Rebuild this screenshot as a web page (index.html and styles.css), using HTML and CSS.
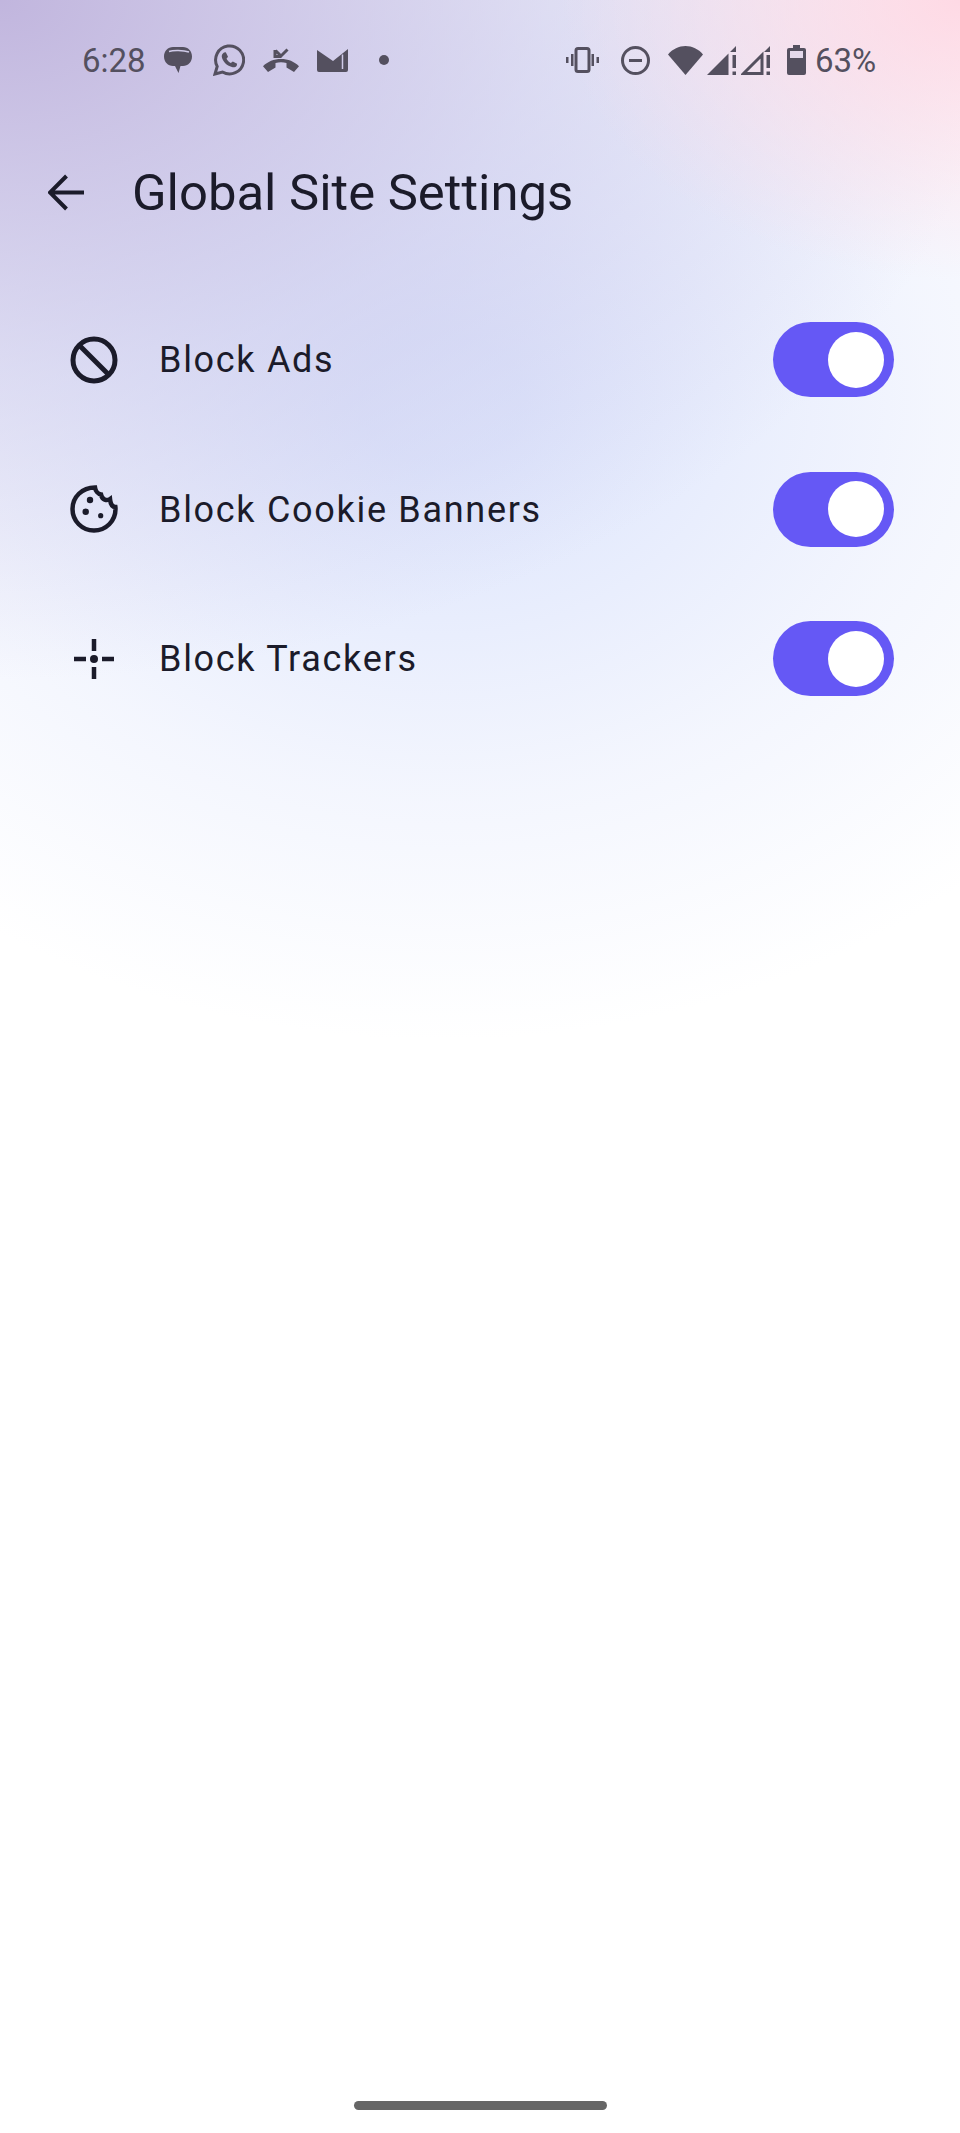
FILE: index.html
```html
<!DOCTYPE html>
<html lang="en">
<head>
  <meta charset="UTF-8">
  <title>Global Site Settings</title>
  <link rel="stylesheet" href="styles.css">
</head>
<body>
  <div class="screen">
    <div class="status-bar">
      <div class="status-left">
        <span class="clock">6:28</span>
        <svg class="ic-msg" viewBox="0 0 28 26"><path d="M9 0h10c5 0 9 4 9 9.500S24 19 19 19h-2.500l-2 7-3.500-7H9C4 19 0 15 0 9.500S4 0 9 0z"/><path class="gap" d="M5 4.500C9 3.200 19 3.200 25 5"/></svg>
        <svg class="ic-whatsapp" viewBox="0 0 32 32"><path class="line" d="M2 30l2.200-7.600A14 14 0 1 1 9.500 28z"/><path d="M11 8.500l1.800-.3 2.200 4.600-1.500 2c1 2 2.500 3.300 4.300 4.200l2-1.600 4.300 2.300-.4 2c-1 1.600-3 1.900-4.800 1.400-5.400-1.500-9-5.400-10.100-10-.3-1.900.5-3.500 2.200-4.600z"/></svg>
        <svg class="ic-call" viewBox="0 0 36 24"><path d="M18 11c7 0 13.500 2.600 18 7.200L31 24l-7.500-4.500V15c-3.500-1-7.500-1-11 0v4.500L5 24l-5-5.800C4.500 13.600 11 11 18 11z"/><path class="line" d="M24.500 1.500L18 8l-5.500-5.500M12 2v6.500h6.500"/></svg>
        <svg class="ic-gmail" viewBox="0 0 31 24"><path d="M0 2l16 11L31 1v21a2 2 0 0 1-2 2H2a2 2 0 0 1-2-2z"/><path class="gap" d="M25.500 6.500V21"/></svg>
        <span class="dot"></span>
      </div>
      <div class="status-right">
        <svg class="ic-vibrate" viewBox="0 0 33 26"><rect class="line" x="10" y="1.500" width="13" height="23" rx="2"/><path d="M5 7h2.500v12H5zM0 10h2.500v6H0zM25.500 7H28v12h-2.500zM30.500 10H33v6h-2.500z"/></svg>
        <svg class="ic-dnd" viewBox="0 0 29 29"><circle class="line" cx="14.500" cy="14.500" r="13"/><path d="M8 13h13v3H8z"/></svg>
        <svg class="ic-wifi" viewBox="0 0 35 29"><path d="M17.500 29L0 8.500C4.500 3 11 0 17.500 0S30.500 3 35 8.500z"/></svg>
        <svg class="ic-signal" viewBox="0 0 30 29"><path d="M0 29L21.500 7.500V29zM23 6l6-6v6h-6zM25.500 9H29v13h-3.500zM25.500 25.500H29V29h-3.500z"/></svg>
        <svg class="ic-signal" viewBox="0 0 30 29"><path class="line" d="M2.500 27.500L21 9v18.500z"/><path d="M23 6l6-6v6h-6zM25.500 9H29v13h-3.500zM25.500 25.500H29V29h-3.500z"/></svg>
        <svg class="ic-battery" viewBox="0 0 19 30"><path d="M6 0h7v3h4a2 2 0 0 1 2 2v23a2 2 0 0 1-2 2H2a2 2 0 0 1-2-2V5a2 2 0 0 1 2-2h4z"/><path class="gap-fill" d="M3 6h13v7H3z"/></svg>
        <span class="percent">63%</span>
      </div>
    </div>

    <div class="header">
      <svg class="back" viewBox="0 0 37 37"><path d="M36 18.500H3M18.500 2L2 18.500 18.500 35"/></svg>
      <h1>Global Site Settings</h1>
    </div>

    <div class="settings">
      <div class="row">
        <svg class="row-icon" viewBox="0 0 48 48"><circle cx="24" cy="24" r="21"/><path d="M9 9l30 30"/></svg>
        <span class="label">Block Ads</span>
        <div class="toggle"><span class="thumb"></span></div>
      </div>
      <div class="row">
        <svg class="row-icon" viewBox="0 0 48 48"><path class="thin" d="M25 2.500C12 2.500 2.500 12 2.500 24S12 45.500 24 45.500 45.500 36 45.500 24c0-.7 0-1.400-.1-2-2.800 0-4.900-3-5.400-8-3 2-8 1-9-4.500-3-.5-5.500-3.500-6-7z"/><circle class="solid" cx="20" cy="15" r="3.200"/><circle class="solid" cx="15.700" cy="26.700" r="3.200"/><circle class="solid" cx="30.700" cy="30.700" r="2.600"/></svg>
        <span class="label">Block Cookie Banners</span>
        <div class="toggle"><span class="thumb"></span></div>
      </div>
      <div class="row">
        <svg class="row-icon" viewBox="0 0 48 48"><path class="thin" d="M24 4v12M24 32v12M4 24h12M32 24h12"/><circle class="solid" cx="24" cy="24" r="4"/></svg>
        <span class="label">Block Trackers</span>
        <div class="toggle"><span class="thumb"></span></div>
      </div>
    </div>

    <div class="home-bar"></div>
  </div>
</body>
</html>
```
FILE: styles.css
```css
html, body {
  margin: 0;
  height: 100%;
}

body {
  font-family: Roboto, sans-serif;
  color: #1b1b2a;
  background: #fff;
}

.screen {
  display: flex;
  flex-direction: column;
  height: 2133px;
  box-sizing: border-box;
  background:
    radial-gradient(ellipse 400px 280px at 100% 0, rgba(255, 214, 226, 0.9), rgba(255, 214, 226, 0) 100%),
    radial-gradient(ellipse 1000px 680px at 0 0, rgba(190, 178, 220, 0.95), rgba(200, 196, 232, 0.5) 55%, rgba(205, 205, 236, 0) 100%),
    radial-gradient(ellipse 800px 640px at 46% 400px, rgba(220, 228, 252, 0.95) 10%, rgba(236, 240, 253, 0.6) 62%, rgba(255, 255, 255, 0) 100%),
    #fff;
}

/* status bar */
.status-bar {
  display: flex;
  justify-content: space-between;
  align-items: center;
  height: 60px;
  margin-top: 30px;
  padding: 0 83px 0 82px;
  color: #54505f;
  font-size: 33px;
}

.status-left, .status-right {
  display: flex;
  align-items: center;
}

.status-bar svg {
  fill: #54505f;
  display: block;
}

.status-bar .line {
  fill: none;
  stroke: #54505f;
  stroke-width: 3;
}

.status-bar .gap {
  fill: none;
  stroke: #cfcae8;
  stroke-width: 1.500;
}

.status-bar .gap-fill {
  fill: #e3d8ea;
}

.clock {
  width: 63px;
}

.ic-msg { width: 28px; height: 26px; margin-left: 19px; }
.ic-whatsapp { width: 32px; height: 32px; margin-left: 21px; }
.ic-call { width: 36px; height: 24px; margin-left: 18px; }
.ic-gmail { width: 31px; height: 24px; margin-left: 18px; }

.dot {
  width: 10px;
  height: 10px;
  margin-left: 31px;
  border-radius: 50%;
  background: #54505f;
}

.ic-vibrate { width: 33px; height: 26px; }
.ic-dnd { width: 29px; height: 29px; margin-left: 22px; }
.ic-wifi { width: 35px; height: 29px; margin-left: 18px; }
.ic-signal { width: 30px; height: 29px; margin-left: 4px; }
.ic-battery { width: 19px; height: 30px; margin-left: 16px; }

.percent {
  margin-left: 9px;
  width: 62px;
}

/* header */
.header {
  display: flex;
  align-items: center;
  height: 72px;
  margin-top: 66px;
  padding-left: 48px;
}

.back {
  width: 37px;
  height: 37px;
  fill: none;
  stroke: #1b1b2a;
  stroke-width: 4;
}

.header h1 {
  margin: 0 0 0 47px;
  font-size: 50.800px;
  font-weight: 400;
}

/* rows */
.settings {
  display: flex;
  flex-direction: column;
  gap: 74.500px;
  margin-top: 94px;
  padding: 0 66px 0 70px;
}

.row {
  display: flex;
  align-items: center;
  height: 75px;
}

.row-icon {
  width: 48px;
  height: 48px;
  fill: none;
  stroke: #1b1b2a;
  stroke-width: 5;
}

.row-icon .thin {
  stroke-width: 4.500;
}

.row-icon .solid {
  fill: #1b1b2a;
  stroke: none;
}

.label {
  flex: 1;
  margin-left: 41px;
  padding-top: 1px;
  font-size: 36px;
  letter-spacing: 1.700px;
}

.toggle {
  display: flex;
  justify-content: flex-end;
  align-items: center;
  box-sizing: border-box;
  width: 121px;
  height: 75px;
  padding-right: 10px;
  border-radius: 38px;
  background: #6558f5;
}

.thumb {
  width: 56px;
  height: 56px;
  border-radius: 50%;
  background: #fff;
}

.home-bar {
  align-self: center;
  width: 253px;
  height: 9px;
  margin-top: auto;
  margin-bottom: 23px;
  border-radius: 5px;
  background: #666;
}
```
